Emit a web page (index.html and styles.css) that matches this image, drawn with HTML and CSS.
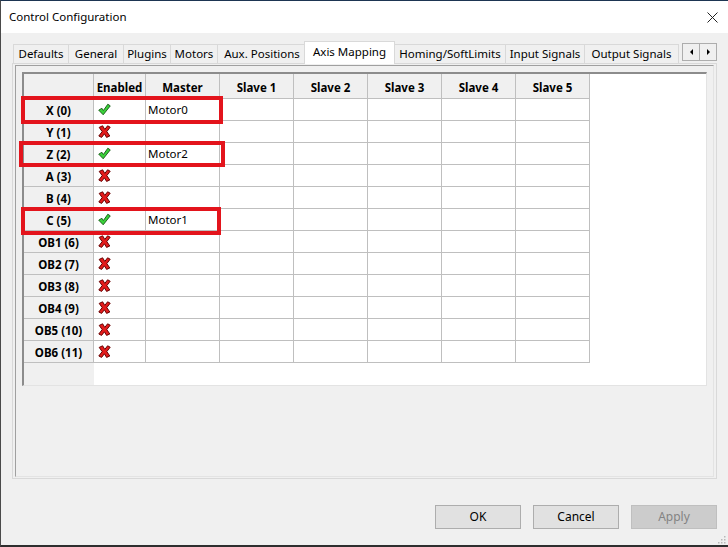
FILE: index.html
```html
<!DOCTYPE html>
<html lang="en">
<head>
    <meta charset="UTF-8">
    <title>Control Configuration</title>
    <link rel="stylesheet" href="styles.css">
</head>
<body>
    <svg class="defs" width="0" height="0">
        <symbol id="ok" viewBox="0 0 14 13">
            <path d="M0.8 7.2 L4.2 5.2 L5.8 7.6 L10.6 0.8 L13.2 2.6 L5.6 12.2 Z" fill="#39d239" stroke="#1a5a1a" stroke-width="1" stroke-linejoin="round"/>
        </symbol>
        <symbol id="no" viewBox="0 0 13 13">
            <path d="M1.2 2.4 L4.6 0.8 L6.8 4.4 L9.6 0.8 L12.2 2.2 L8.8 6.6 L11.8 11 L8.6 12.4 L6.4 8.8 L3.6 12.4 L0.8 11 L4.2 6.6 Z" fill="#e41c1c" stroke="#650000" stroke-width="1" stroke-linejoin="round"/>
        </symbol>
    </svg>

    <div class="window">
        <div class="titlebar">
            <span class="title">Control Configuration</span>
            <svg class="close" width="11" height="11" viewBox="0 0 11 11">
                <path d="M0.5 0.5 L10.5 10.5 M10.5 0.5 L0.5 10.5" stroke="#222" stroke-width="1"/>
            </svg>
        </div>

        <div class="content">
            <div class="tabstrip">
                <div class="tabs">
                    <div class="tab">Defaults</div>
                    <div class="tab">General</div>
                    <div class="tab">Plugins</div>
                    <div class="tab">Motors</div>
                    <div class="tab">Aux. Positions</div>
                    <div class="tab active">Axis Mapping</div>
                    <div class="tab">Homing/SoftLimits</div>
                    <div class="tab">Input Signals</div>
                    <div class="tab">Output Signals</div>
                </div>
                <div class="tab-scroll">
                    <span class="scroll-btn"><i class="arrow left"></i></span>
                    <span class="scroll-btn"><i class="arrow right"></i></span>
                </div>
            </div>

            <div class="panel">
                <div class="frame">
                    <div class="grid">
                        <div class="cell corner"></div>
                        <div class="cell head">Enabled</div>
                        <div class="cell head">Master</div>
                        <div class="cell head">Slave 1</div>
                        <div class="cell head">Slave 2</div>
                        <div class="cell head">Slave 3</div>
                        <div class="cell head">Slave 4</div>
                        <div class="cell head">Slave 5</div>

                        <div class="cell rowhead">X (0)</div>
                        <div class="cell icon"><svg><use href="#ok"/></svg></div>
                        <div class="cell text">Motor0</div>
                        <div class="cell"></div><div class="cell"></div><div class="cell"></div><div class="cell"></div><div class="cell"></div>

                        <div class="cell rowhead">Y (1)</div>
                        <div class="cell icon"><svg><use href="#no"/></svg></div>
                        <div class="cell"></div>
                        <div class="cell"></div><div class="cell"></div><div class="cell"></div><div class="cell"></div><div class="cell"></div>

                        <div class="cell rowhead">Z (2)</div>
                        <div class="cell icon"><svg><use href="#ok"/></svg></div>
                        <div class="cell text">Motor2</div>
                        <div class="cell"></div><div class="cell"></div><div class="cell"></div><div class="cell"></div><div class="cell"></div>

                        <div class="cell rowhead">A (3)</div>
                        <div class="cell icon"><svg><use href="#no"/></svg></div>
                        <div class="cell"></div>
                        <div class="cell"></div><div class="cell"></div><div class="cell"></div><div class="cell"></div><div class="cell"></div>

                        <div class="cell rowhead">B (4)</div>
                        <div class="cell icon"><svg><use href="#no"/></svg></div>
                        <div class="cell"></div>
                        <div class="cell"></div><div class="cell"></div><div class="cell"></div><div class="cell"></div><div class="cell"></div>

                        <div class="cell rowhead">C (5)</div>
                        <div class="cell icon"><svg><use href="#ok"/></svg></div>
                        <div class="cell text">Motor1</div>
                        <div class="cell"></div><div class="cell"></div><div class="cell"></div><div class="cell"></div><div class="cell"></div>

                        <div class="cell rowhead">OB1 (6)</div>
                        <div class="cell icon"><svg><use href="#no"/></svg></div>
                        <div class="cell"></div>
                        <div class="cell"></div><div class="cell"></div><div class="cell"></div><div class="cell"></div><div class="cell"></div>

                        <div class="cell rowhead">OB2 (7)</div>
                        <div class="cell icon"><svg><use href="#no"/></svg></div>
                        <div class="cell"></div>
                        <div class="cell"></div><div class="cell"></div><div class="cell"></div><div class="cell"></div><div class="cell"></div>

                        <div class="cell rowhead">OB3 (8)</div>
                        <div class="cell icon"><svg><use href="#no"/></svg></div>
                        <div class="cell"></div>
                        <div class="cell"></div><div class="cell"></div><div class="cell"></div><div class="cell"></div><div class="cell"></div>

                        <div class="cell rowhead">OB4 (9)</div>
                        <div class="cell icon"><svg><use href="#no"/></svg></div>
                        <div class="cell"></div>
                        <div class="cell"></div><div class="cell"></div><div class="cell"></div><div class="cell"></div><div class="cell"></div>

                        <div class="cell rowhead">OB5 (10)</div>
                        <div class="cell icon"><svg><use href="#no"/></svg></div>
                        <div class="cell"></div>
                        <div class="cell"></div><div class="cell"></div><div class="cell"></div><div class="cell"></div><div class="cell"></div>

                        <div class="cell rowhead">OB6 (11)</div>
                        <div class="cell icon"><svg><use href="#no"/></svg></div>
                        <div class="cell"></div>
                        <div class="cell"></div><div class="cell"></div><div class="cell"></div><div class="cell"></div><div class="cell"></div>

                        <!-- red annotation boxes -->
                        <div class="mark mark-x"></div>
                        <div class="mark mark-z"></div>
                        <div class="mark mark-c"></div>
                    </div>
                </div>
            </div>

            <div class="buttons">
                <button class="btn">OK</button>
                <button class="btn">Cancel</button>
                <button class="btn" disabled>Apply</button>
            </div>
        </div>

        <svg class="grip" width="8" height="8" viewBox="0 0 8 8">
            <rect x="6" y="0" width="1.5" height="1.5" fill="#b8b8b8"/>
            <rect x="3" y="3" width="1.5" height="1.5" fill="#b8b8b8"/>
            <rect x="6" y="3" width="1.5" height="1.5" fill="#b8b8b8"/>
            <rect x="0" y="6" width="1.5" height="1.5" fill="#b8b8b8"/>
            <rect x="3" y="6" width="1.5" height="1.5" fill="#b8b8b8"/>
            <rect x="6" y="6" width="1.5" height="1.5" fill="#b8b8b8"/>
        </svg>
    </div>
</body>
</html>
```

FILE: styles.css
```css
* {
    box-sizing: border-box;
}

body {
    margin: 0;
    font-family: "Noto Sans", "Open Sans", sans-serif;
    font-size: 11.5px;
    color: #000;
    background: #f0f0f0;
}

.defs {
    position: absolute;
}

.window {
    position: relative;
    width: 728px;
    height: 547px;
    display: flex;
    flex-direction: column;
    border-top: 1px solid #1d3552;
    border-left: 1px solid #4a4a4a;
    border-bottom: 2px solid #2e2e2e;
}

.titlebar {
    height: 32px;
    background: #fff;
    display: flex;
    align-items: center;
    justify-content: space-between;
    padding: 0 10px 1px 8px;
}

.title {
    font-size: 11.5px;
}

.close {
    margin-top: 1px;
}

.content {
    flex: 1;
    display: flex;
    flex-direction: column;
    padding: 8px 11px 0 11px;
    background: #f0f0f0;
}

/* tabs */

.tabstrip {
    height: 22px;
    display: flex;
    justify-content: space-between;
}

.tabs {
    display: flex;
    align-items: flex-end;
    padding-left: 1px;
}

.tab {
    height: 19px;
    border: 1px solid #d9d9d9;
    border-bottom: none;
    margin-right: -1px;
    background: #f0f0f0;
    display: flex;
    align-items: center;
    justify-content: center;
    white-space: nowrap;
    padding-bottom: 1px;
}

.tab:nth-child(1) { width: 56px; }
.tab:nth-child(2) { width: 56px; }
.tab:nth-child(3) { width: 48px; }
.tab:nth-child(4) { width: 48px; }
.tab:nth-child(5) { width: 90px; }
.tab:nth-child(7) { width: 112px; }
.tab:nth-child(8) { width: 80px; }
.tab:nth-child(9) { width: 95px; }

.tab.active {
    width: 91px;
    height: 23px;
    margin: 0 -1px -1px -2px;
    padding-bottom: 3px;
    background: #fff;
    position: relative;
    z-index: 1;
}

.tab-scroll {
    display: flex;
    margin-top: 2px;
    height: 18px;
}

.scroll-btn {
    width: 18px;
    height: 18px;
    border: 1px solid #adadad;
    background: #f0f0f0;
    display: flex;
    align-items: center;
    justify-content: center;
}

.scroll-btn + .scroll-btn {
    border-left: none;
    width: 17px;
}

.arrow {
    width: 0;
    height: 0;
    border-top: 3px solid transparent;
    border-bottom: 3px solid transparent;
}

.arrow.left {
    border-right: 3px solid #000;
}

.arrow.right {
    border-left: 3px solid #000;
}

/* tab page */

.panel {
    height: 416px;
    border: 1px solid #d9d9d9;
    background: #f0f0f0;
    display: flex;
    flex-direction: column;
    padding: 1px 2px 1px 2px;
}

.frame {
    flex: 1;
    border: 1px solid;
    border-color: #a0a0a0 #e3e3e3 #e3e3e3 #a0a0a0;
    padding: 6px 6px 0 6px;
}

.grid {
    position: relative;
    width: 685px;
    height: 314px;
    border-style: solid;
    border-width: 2px 1px 1px 2px;
    border-color: #8c8c8c #e3e3e3 #e3e3e3 #8c8c8c;
    background: linear-gradient(to right, #f0f0f0 70px, #fff 70px);
    display: grid;
    grid-template-columns: 70px 52px repeat(6, 74px);
    grid-template-rows: 25px;
    grid-auto-rows: 22px;
    align-content: start;
}

.cell {
    border-right: 1px solid #bfbfbf;
    border-bottom: 1px solid #bfbfbf;
    background: #fff;
    display: flex;
    align-items: center;
}

.corner,
.head,
.rowhead {
    background: #f0f0f0;
    font-weight: bold;
    justify-content: center;
}

.head {
    padding-top: 2px;
}

.rowhead {
    padding-top: 1px;
}

.text {
    padding: 0 0 1px 2px;
}

.icon {
    padding-left: 4px;
}

.icon svg {
    width: 13px;
    height: 13px;
}

.mark {
    position: absolute;
    border: 4px solid #e3141c;
}

.mark-x {
    left: -3px;
    top: 22px;
    width: 202px;
    height: 28px;
}

.mark-z {
    left: -5px;
    top: 67px;
    width: 206px;
    height: 26px;
}

.mark-c {
    left: -3px;
    top: 133px;
    width: 200px;
    height: 28px;
}

/* dialog buttons */

.buttons {
    display: flex;
    justify-content: flex-end;
    gap: 12px;
    margin-top: 26px;
}

.btn {
    width: 86px;
    height: 24px;
    border: 1px solid #adadad;
    background: #e1e1e1;
    font-family: inherit;
    font-size: 12px;
    color: #000;
    padding: 0 0 2px;
}

.btn:disabled {
    background: #cccccc;
    border-color: #bfbfbf;
    color: #838383;
}

.grip {
    position: absolute;
    right: 2px;
    bottom: 1px;
}
```
